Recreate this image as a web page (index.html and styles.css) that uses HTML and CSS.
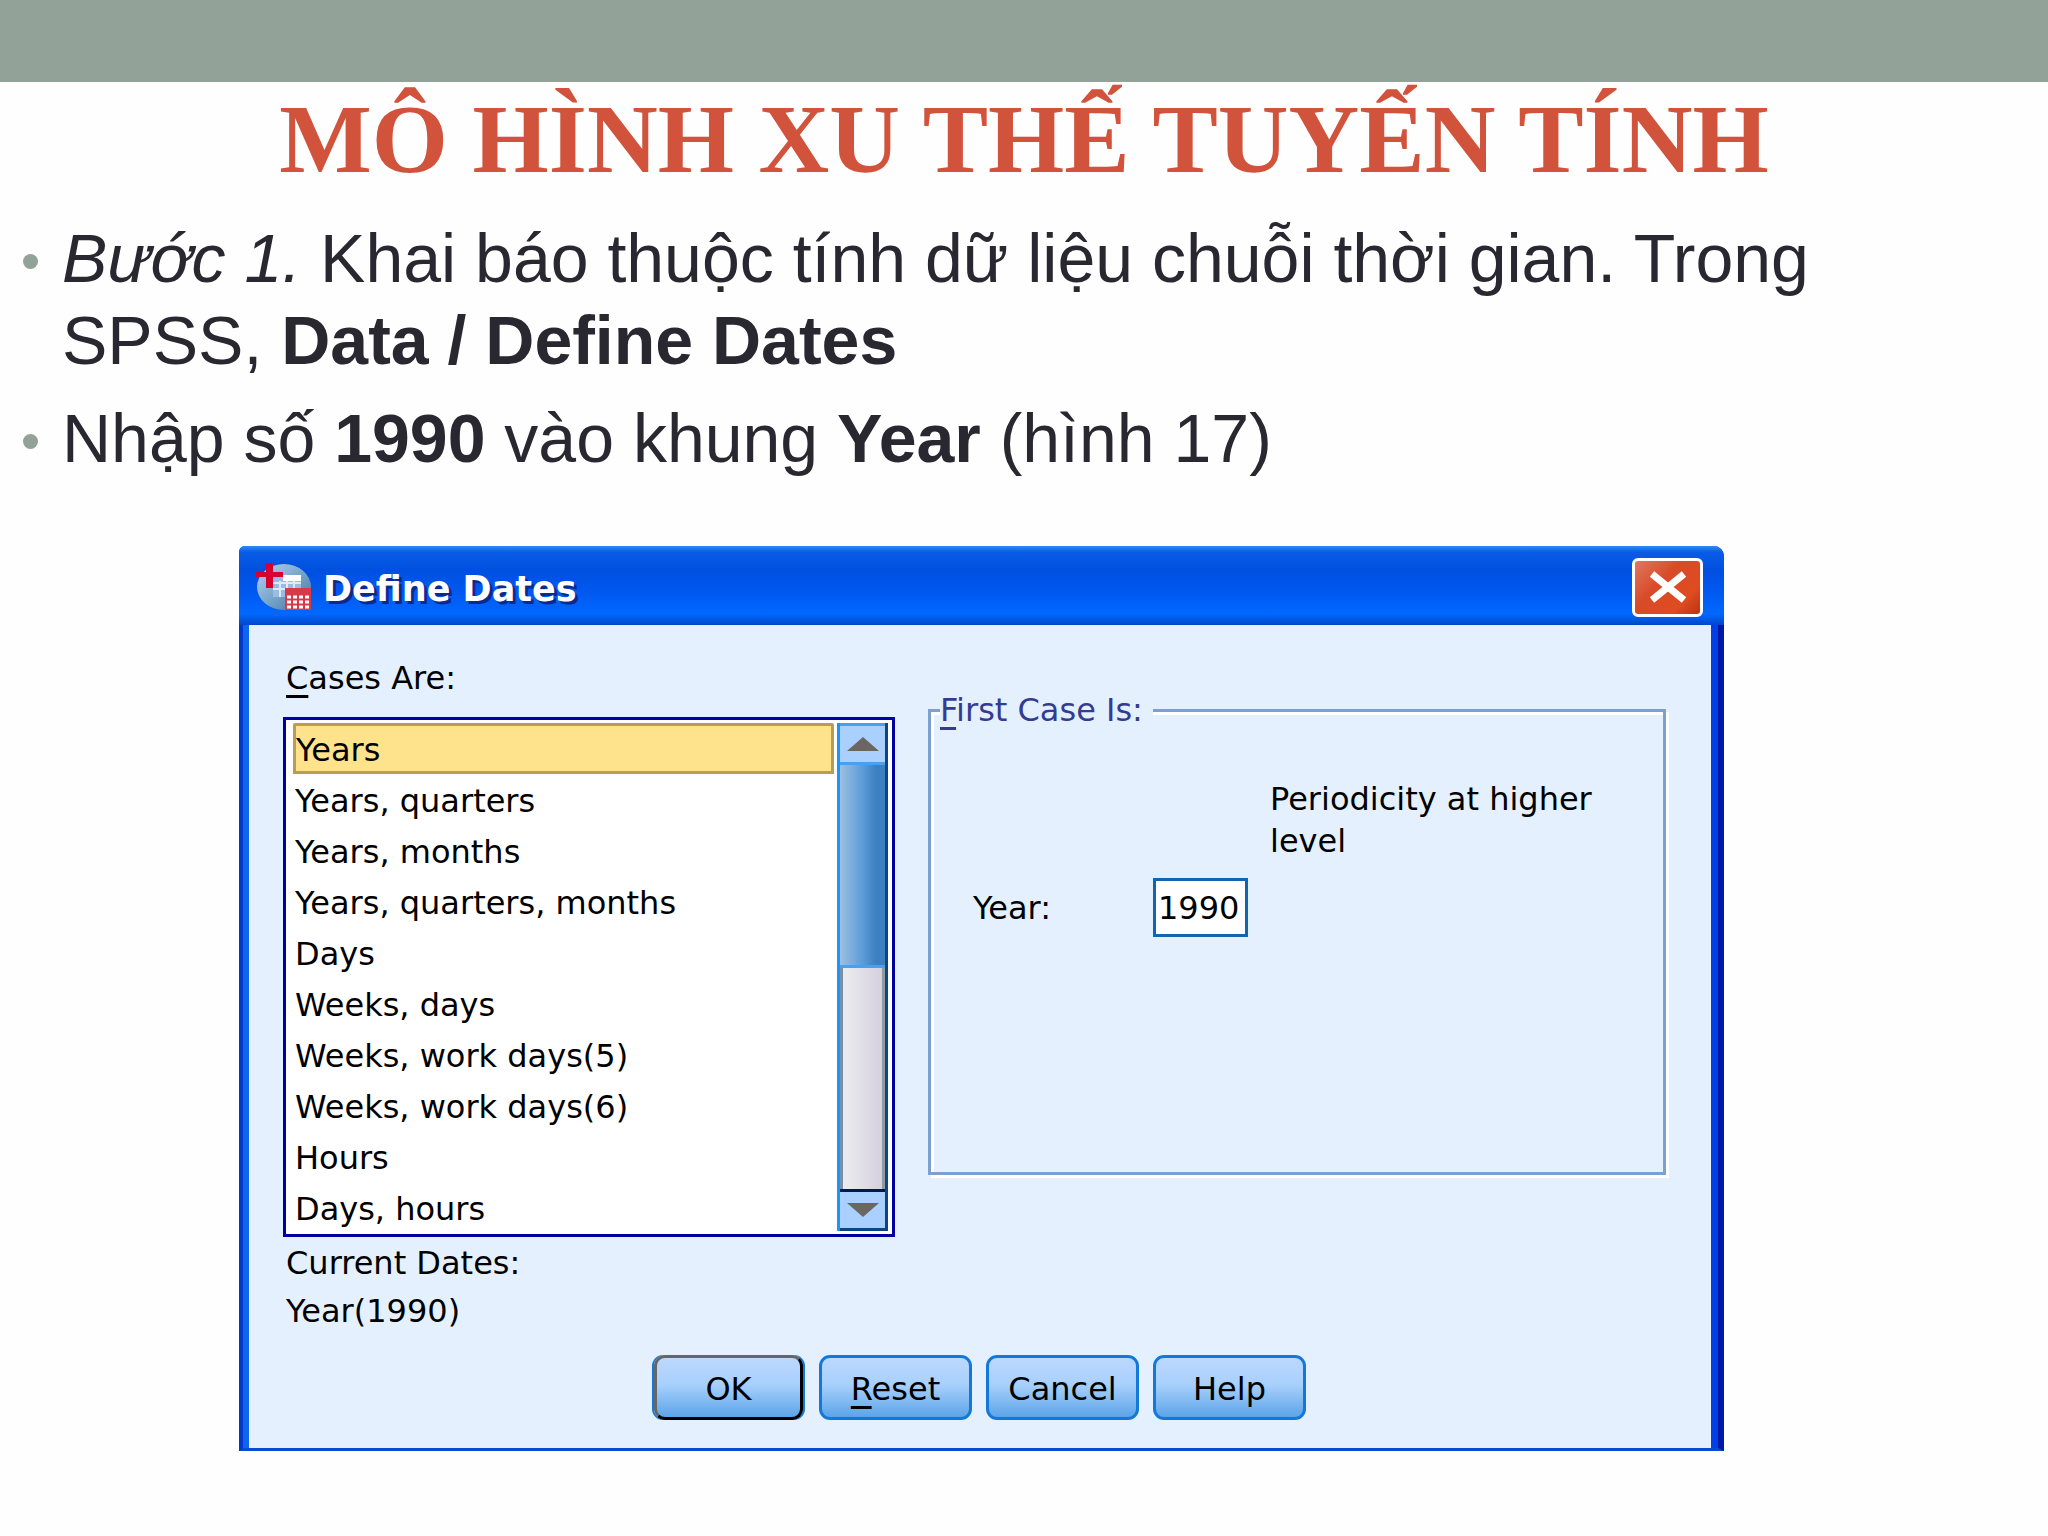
FILE: index.html
```html
<!DOCTYPE html>
<html lang="vi">
<head>
  <meta charset="UTF-8">
  <title>Mô hình xu thế tuyến tính</title>
  <link rel="stylesheet" href="styles.css">
</head>
<body>

  <div class="top-bar"></div>

  <h1>MÔ HÌNH XU THẾ TUYẾN TÍNH</h1>

  <ul class="steps">
    <li><em>Bước 1.</em> Khai báo thuộc tính dữ liệu chuỗi thời gian. Trong SPSS, <strong>Data / Define Dates</strong></li>
    <li>Nhập số <strong>1990</strong> vào khung <strong>Year</strong> (hình 17)</li>
  </ul>

  <form class="dialog">
    <div class="title-bar">
      <svg class="app-icon" width="56" height="48" viewBox="0 0 56 48">
        <defs>
          <linearGradient id="globe" x1="0" y1="0" x2="1" y2="1">
            <stop offset="0" stop-color="#b4d4ee"/>
            <stop offset="0.5" stop-color="#7aa6cc"/>
            <stop offset="1" stop-color="#3f709c"/>
          </linearGradient>
        </defs>
        <ellipse cx="28" cy="24" rx="27" ry="23" fill="url(#globe)"/>
        <rect x="17" y="12" width="28" height="22" fill="#9bbbe2"/>
        <path d="M17 20H45M17 26H34M24 18V34M31 18V34M38 18V25" stroke="#dcebfa" stroke-width="2"/>
        <rect x="27" y="12" width="18" height="6" fill="#fff"/>
        <path d="M10 0h7v9h10v5H17v11h-7V14H0V9h10z" fill="#d8002f"/>
        <rect x="29" y="25" width="26" height="22" fill="#d93848"/>
        <path d="M31 34H53M31 39H53M31 44H53" stroke="#fff" stroke-width="3"/>
        <path d="M36 32V47M42 32V47M48 32V47" stroke="#d93848" stroke-width="2"/>
      </svg>
      <span class="caption">Define Dates</span>
      <button type="button" class="btn-close" aria-label="Close">
        <svg width="40" height="34" viewBox="0 0 40 34">
          <path d="M4 4L36 30M36 4L4 30" stroke="#fff" stroke-width="7"/>
        </svg>
      </button>
    </div>

    <div class="panes">
      <div class="cases">
        <label for="cases"><u>C</u>ases Are:</label>
        <div class="list-box">
          <select id="cases" size="10">
            <option selected>Years</option>
            <option>Years, quarters</option>
            <option>Years, months</option>
            <option>Years, quarters, months</option>
            <option>Days</option>
            <option>Weeks, days</option>
            <option>Weeks, work days(5)</option>
            <option>Weeks, work days(6)</option>
            <option>Hours</option>
            <option>Days, hours</option>
          </select>
          <div class="scrollbar">
            <button type="button" class="scroll-up" aria-label="Scroll up">
              <svg width="32" height="16" viewBox="0 0 32 16"><path d="M0 15L16 1L32 15z" fill="#6b6660"/></svg>
            </button>
            <div class="thumb"></div>
            <div class="track"></div>
            <button type="button" class="scroll-down" aria-label="Scroll down">
              <svg width="32" height="16" viewBox="0 0 32 16"><path d="M0 1L16 15L32 1z" fill="#6b6660"/></svg>
            </button>
          </div>
        </div>
        <div class="current">Current Dates:<br>Year(1990)</div>
      </div>

      <fieldset>
        <legend><u>F</u>irst Case Is:</legend>
        <div class="first-case">
          <span class="periodicity">Periodicity at higher<br>level</span>
          <label for="year">Year:</label>
          <input id="year" type="text" value="1990">
        </div>
      </fieldset>
    </div>

    <div class="buttons">
      <button type="button" class="btn btn-default">OK</button>
      <button type="button" class="btn"><u>R</u>eset</button>
      <button type="button" class="btn">Cancel</button>
      <button type="button" class="btn">Help</button>
    </div>
  </form>

</body>
</html>
```
FILE: styles.css
```css
* {
  box-sizing: border-box;
}

body {
  margin: 0;
  background: #fefefe;
  color: #292730;
  font-family: "Liberation Sans", Arial, sans-serif;
}

.top-bar {
  position: relative;
  z-index: 1;
  height: 82px;
  background: #92a299;
}

h1 {
  margin: 7px 0 28px;
  text-align: center;
  color: #d2533c;
  font-family: "Liberation Serif", "Times New Roman", serif;
  font-size: 98px;
  line-height: 100px;
}

.steps {
  list-style: none;
  margin: 0 60px 67px 0;
  padding: 0 0 0 62px;
  font-size: 68px;
  line-height: 82px;
}

.steps li {
  position: relative;
}

.steps li + li {
  margin-top: 16px;
}

.steps li::before {
  content: "";
  position: absolute;
  left: -39px;
  top: 37px;
  width: 15px;
  height: 15px;
  border-radius: 50%;
  background: #92a299;
}

/* dialog window */
.dialog {
  margin: 0 324px 85px 239px;
  border: solid #0b49d2;
  border-width: 0 6px 3px 4px;
  border-left-color: #0038cc;
  border-right-color: #0018a4;
  border-radius: 6px 10px 0 0;
  box-shadow: inset 6px 0 0 #0f66ee, inset -7px 0 0 #0040e6;
  background: #e5f0fe;
  color: #000;
  font-family: "DejaVu Sans", Verdana, sans-serif;
  font-size: 32px;
  line-height: 40px;
}

.title-bar {
  display: flex;
  align-items: center;
  gap: 11px;
  height: 79px;
  margin: 0 -6px 0 -4px;
  padding: 3px 21px 0 17px;
  border-radius: 6px 10px 0 0;
  background: linear-gradient(#2f8cf8 0, #0a5ce6 6px, #0050e0 24px, #0058f0 45px, #0068ff 68px, #0046c8 79px);
}

.caption {
  flex: 1;
  padding-top: 3px;
  color: #fff;
  font-size: 35px;
  font-weight: bold;
  text-shadow: 3px 3px 0 #0a2a90;
}

.btn-close {
  display: flex;
  align-items: center;
  justify-content: center;
  width: 71px;
  height: 59px;
  padding: 0;
  border: 3px solid #fff;
  border-radius: 6px;
  background: linear-gradient(135deg, #e07860, #d84a28 40%, #e04c20 75%, #b83410);
}

.panes {
  display: grid;
  grid-template-columns: 612fr 738fr;
  gap: 33px;
  align-items: start;
  padding: 33px 52px 0 40px;
}

u {
  text-decoration-thickness: 3px;
  text-underline-offset: 6px;
  text-decoration-skip-ink: none;
}

.cases label {
  display: block;
  margin: 0 3px 19px;
}

.list-box {
  display: flex;
  height: 520px;
  padding: 3px 4px 3px 7px;
  border: 3px solid #0000a0;
  background: #fff;
}

select {
  flex: 1;
  min-width: 0;
  height: 508px;
  margin-right: 3px;
  padding: 0;
  border: none;
  outline: none;
  overflow: hidden;
  background: #fff;
  color: #000;
  font: inherit;
}

option {
  height: 51px;
  min-height: 51px;
  padding: 8px 2px 0;
  color: #000;
}

option:checked {
  padding: 5px 0 0;
  border: 3px solid #b89c58;
  background: linear-gradient(#ffe38c, #ffe38c);
  color: #000;
}

.scrollbar {
  display: flex;
  flex-direction: column;
  width: 51px;
  border-left: 3px solid #1c94f8;
  border-right: 3px solid #0c4484;
}

.scrollbar button {
  display: flex;
  align-items: center;
  justify-content: center;
  height: 42px;
  padding: 0;
  border: 3px solid #4aa0f0;
  border-width: 3px 0;
  background: #aad0ff;
}

.scrollbar .scroll-down {
  border-top-color: #001850;
  border-bottom-color: #0c4484;
}

.thumb {
  height: 203px;
  border-bottom: 3px solid #4aa0f0;
  background: linear-gradient(90deg, #9cc0e0, #5c9cd8 50%, #3c80c0 80%);
}

.track {
  flex: 1;
  border-left: 3px solid #7890a8;
  border-right: 3px solid #8c9ca0;
  background: linear-gradient(90deg, #ececf0, #d4d0de);
}

.current {
  margin: 2px 3px 0;
  line-height: 48px;
}

fieldset {
  min-width: 0;
  margin: 32px 0 0;
  padding: 48px 40px 235px 42px;
  border: 3px solid #7ca0d0;
  box-shadow: 3px 3px 0 #fff, inset 3px 3px 0 #fff;
}

legend {
  margin-left: -33px;
  padding: 0 10px 0 0;
  background: #e5f0fe;
  color: #333c90;
}

.first-case {
  display: grid;
  grid-template-columns: 180px 95px 1fr;
  gap: 16px 0;
  align-items: center;
}

.periodicity {
  grid-column: 3;
  margin-left: 22px;
  line-height: 42px;
}

input {
  width: 100%;
  height: 59px;
  padding: 0 2px;
  border: 3px solid #1464b0;
  background: #fff;
  color: #000;
  font: inherit;
}

.buttons {
  display: flex;
  justify-content: center;
  gap: 14px;
  padding: 20px 3px 28px 0;
}

.btn {
  width: 153px;
  height: 65px;
  padding: 2px 0 0;
  border: 3px solid #1478d8;
  border-radius: 11px;
  background: linear-gradient(#bcd8ff, #a8d0fc 45%, #5ca4e8);
  color: #000;
  font: inherit;
}

.btn-default {
  width: 149px;
  margin: 0 2px;
  border-color: #666 #000 #000 #666;
  box-shadow: -2px 0 0 #1478d8, 2px 0 0 #1478d8;
}
```
